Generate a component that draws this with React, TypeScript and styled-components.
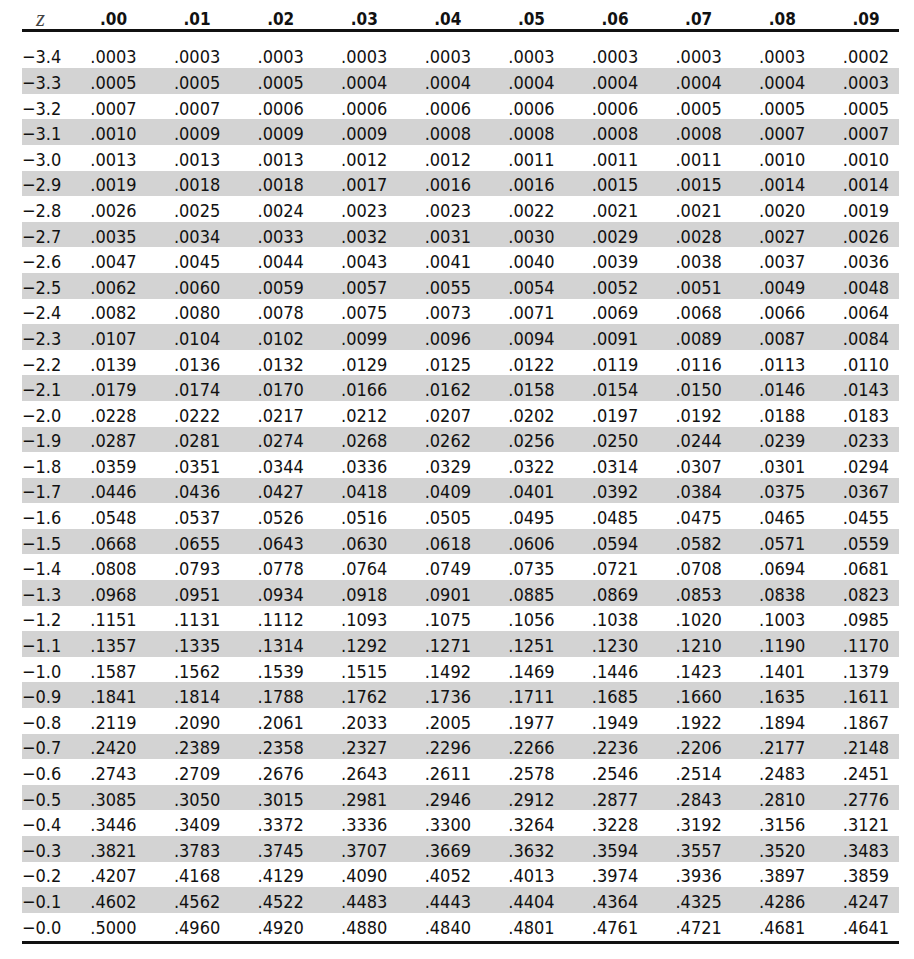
import React from "react";
import styled, { createGlobalStyle } from "styled-components";

const Global = createGlobalStyle`
  html, body { margin: 0; padding: 0; background: #ffffff; }
  body { font-family: "DejaVu Sans Condensed", "DejaVu Sans", sans-serif; font-stretch: condensed; color: #111111; }
`;

const RAW = `-3.4 .0003 .0003 .0003 .0003 .0003 .0003 .0003 .0003 .0003 .0002
-3.3 .0005 .0005 .0005 .0004 .0004 .0004 .0004 .0004 .0004 .0003
-3.2 .0007 .0007 .0006 .0006 .0006 .0006 .0006 .0005 .0005 .0005
-3.1 .0010 .0009 .0009 .0009 .0008 .0008 .0008 .0008 .0007 .0007
-3.0 .0013 .0013 .0013 .0012 .0012 .0011 .0011 .0011 .0010 .0010
-2.9 .0019 .0018 .0018 .0017 .0016 .0016 .0015 .0015 .0014 .0014
-2.8 .0026 .0025 .0024 .0023 .0023 .0022 .0021 .0021 .0020 .0019
-2.7 .0035 .0034 .0033 .0032 .0031 .0030 .0029 .0028 .0027 .0026
-2.6 .0047 .0045 .0044 .0043 .0041 .0040 .0039 .0038 .0037 .0036
-2.5 .0062 .0060 .0059 .0057 .0055 .0054 .0052 .0051 .0049 .0048
-2.4 .0082 .0080 .0078 .0075 .0073 .0071 .0069 .0068 .0066 .0064
-2.3 .0107 .0104 .0102 .0099 .0096 .0094 .0091 .0089 .0087 .0084
-2.2 .0139 .0136 .0132 .0129 .0125 .0122 .0119 .0116 .0113 .0110
-2.1 .0179 .0174 .0170 .0166 .0162 .0158 .0154 .0150 .0146 .0143
-2.0 .0228 .0222 .0217 .0212 .0207 .0202 .0197 .0192 .0188 .0183
-1.9 .0287 .0281 .0274 .0268 .0262 .0256 .0250 .0244 .0239 .0233
-1.8 .0359 .0351 .0344 .0336 .0329 .0322 .0314 .0307 .0301 .0294
-1.7 .0446 .0436 .0427 .0418 .0409 .0401 .0392 .0384 .0375 .0367
-1.6 .0548 .0537 .0526 .0516 .0505 .0495 .0485 .0475 .0465 .0455
-1.5 .0668 .0655 .0643 .0630 .0618 .0606 .0594 .0582 .0571 .0559
-1.4 .0808 .0793 .0778 .0764 .0749 .0735 .0721 .0708 .0694 .0681
-1.3 .0968 .0951 .0934 .0918 .0901 .0885 .0869 .0853 .0838 .0823
-1.2 .1151 .1131 .1112 .1093 .1075 .1056 .1038 .1020 .1003 .0985
-1.1 .1357 .1335 .1314 .1292 .1271 .1251 .1230 .1210 .1190 .1170
-1.0 .1587 .1562 .1539 .1515 .1492 .1469 .1446 .1423 .1401 .1379
-0.9 .1841 .1814 .1788 .1762 .1736 .1711 .1685 .1660 .1635 .1611
-0.8 .2119 .2090 .2061 .2033 .2005 .1977 .1949 .1922 .1894 .1867
-0.7 .2420 .2389 .2358 .2327 .2296 .2266 .2236 .2206 .2177 .2148
-0.6 .2743 .2709 .2676 .2643 .2611 .2578 .2546 .2514 .2483 .2451
-0.5 .3085 .3050 .3015 .2981 .2946 .2912 .2877 .2843 .2810 .2776
-0.4 .3446 .3409 .3372 .3336 .3300 .3264 .3228 .3192 .3156 .3121
-0.3 .3821 .3783 .3745 .3707 .3669 .3632 .3594 .3557 .3520 .3483
-0.2 .4207 .4168 .4129 .4090 .4052 .4013 .3974 .3936 .3897 .3859
-0.1 .4602 .4562 .4522 .4483 .4443 .4404 .4364 .4325 .4286 .4247
-0.0 .5000 .4960 .4920 .4880 .4840 .4801 .4761 .4721 .4681 .4641`;

const ROWS = RAW.split("\n").map((line) => {
  const [z, ...vals] = line.trim().split(/\s+/);
  return { z: z.replace("-", "\u2212"), vals };
});

const HEADERS = [".00", ".01", ".02", ".03", ".04", ".05", ".06", ".07", ".08", ".09"];

const COLS = "49.7px repeat(9, 83.6px) 1fr";

const Page = styled.div`
  padding: 0 15px 0 22px;
  width: 877px;
`;

const Table = styled.div`
  display: flex;
  flex-direction: column;
  width: 877px;
`;

const HeadRow = styled.div`
  display: grid;
  grid-template-columns: ${COLS};
  align-items: end;
  height: 29px;
  border-bottom: 3px solid #111;
  box-sizing: content-box;
`;

const HeadCell = styled.div<{ $last?: boolean }>`
  text-align: center;
  font-weight: bold;
  font-size: 17px;
  line-height: 20px;
  padding-left: ${(p) => (p.$last ? "9px" : "0")};
`;

const ZHead = styled.div`
  font-family: "Liberation Serif", "DejaVu Serif", serif;
  font-style: italic;
  font-size: 23px;
  line-height: 20px;
  color: #444;
  padding-left: 14px;
`;

const Body = styled.div`
  display: flex;
  flex-direction: column;
  margin-top: 10.6px;
  padding-bottom: 2.4px;
  border-bottom: 3px solid #111;
`;

const Row = styled.div<{ $shaded: boolean }>`
  display: grid;
  grid-template-columns: ${COLS};
  align-items: center;
  height: 25.6px;
  box-sizing: border-box;
  padding-top: 3px;
  background: ${(p) => (p.$shaded ? "#d3d3d3" : "transparent")};
`;

const ZCell = styled.div`
  text-align: left;
  font-size: 18px;
  line-height: 21px;
  white-space: nowrap;
`;

const Cell = styled.div<{ $last?: boolean }>`
  text-align: center;
  font-size: 18px;
  line-height: 21px;
  padding-left: ${(p) => (p.$last ? "9px" : "0")};
`;

export default function App() {
  return (
    <Page>
      <Global />
      <Table>
        <HeadRow>
          <ZHead>z</ZHead>
          {HEADERS.map((h, i) => (
            <HeadCell key={h} $last={i === HEADERS.length - 1}>
              {h}
            </HeadCell>
          ))}
        </HeadRow>
        <Body>
          {ROWS.map((r, ri) => (
            <Row key={r.z} $shaded={ri % 2 === 1}>
              <ZCell>{r.z}</ZCell>
              {r.vals.map((v, i) => (
                <Cell key={i} $last={i === r.vals.length - 1}>
                  {v}
                </Cell>
              ))}
            </Row>
          ))}
        </Body>
      </Table>
    </Page>
  );
}
